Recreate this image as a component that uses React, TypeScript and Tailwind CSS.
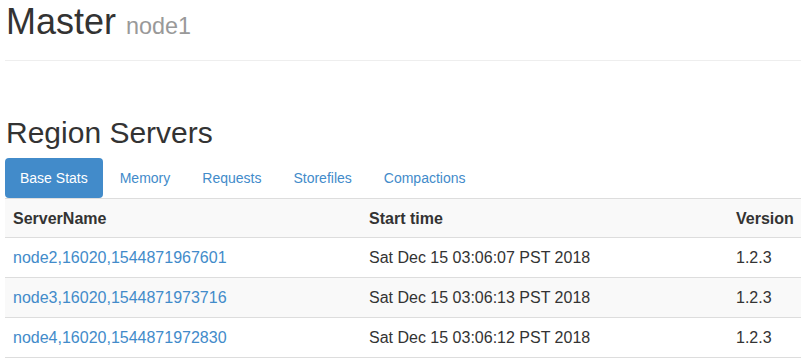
import React from "react";

const rows = [
  ["node2,16020,1544871967601", "Sat Dec 15 03:06:07 PST 2018", "1.2.3"],
  ["node3,16020,1544871973716", "Sat Dec 15 03:06:13 PST 2018", "1.2.3"],
  ["node4,16020,1544871972830", "Sat Dec 15 03:06:12 PST 2018", "1.2.3"],
];

const tabs = ["Base Stats", "Memory", "Requests", "Storefiles", "Compactions"];

export default function App() {
  return (
    <div
      className="w-[801px] h-[358px] overflow-hidden bg-white pl-[5px] text-[#333]"
      style={{ fontFamily: '"Liberation Sans", Arial, sans-serif' }}
    >
      <div className="w-[796px] border-b border-[#eee] pb-[9px] pt-[1.5px]">
        <h1 className="mb-[10px] text-[36px] leading-[39.6px] font-normal ml-px">
          Master <span className="text-[23.4px] leading-none text-[#999]">node1</span>
        </h1>
      </div>
      <h2 className="mt-[55px] mb-[9px] text-[30px] leading-[33px] font-normal ml-px">
        Region Servers
      </h2>
      <div className="flex text-[14px] leading-[20px]">
        {tabs.map((t, i) => (
          <div
            key={t}
            className={
              i === 0
                ? "rounded-[4px] bg-[#428bca] px-[15px] py-[10px] text-white"
                : "ml-[2px] px-[15px] py-[10px] text-[#428bca]"
            }
          >
            {t}
          </div>
        ))}
      </div>
      <table className="w-[800px] border-collapse text-[16px] leading-[23px] text-left">
        <tbody>
          <tr className="bg-[#f9f9f9]">
            <th className="w-[356px] border-t border-[#ddd] px-2 pt-2 pb-[7px] font-bold">ServerName</th>
            <th className="w-[367px] border-t border-[#ddd] px-2 pt-2 pb-[7px] font-bold">Start time</th>
            <th className="border-t border-[#ddd] px-2 pt-2 pb-[7px] font-bold">Version</th>
          </tr>
          {rows.map((r, i) => (
            <tr key={r[0]} className={i % 2 === 1 ? "bg-[#f9f9f9]" : "bg-white"}>
              <td className="border-t border-[#ddd] px-2 py-2 text-[#428bca]">{r[0]}</td>
              <td className="border-t border-[#ddd] px-2 py-2">{r[1]}</td>
              <td className="border-t border-[#ddd] px-2 py-2">{r[2]}</td>
            </tr>
          ))}
          <tr>
            <td className="border-t border-[#ddd] px-2 py-2">&nbsp;</td>
            <td className="border-t border-[#ddd] px-2 py-2">&nbsp;</td>
            <td className="border-t border-[#ddd] px-2 py-2">&nbsp;</td>
          </tr>
        </tbody>
      </table>
    </div>
  );
}
